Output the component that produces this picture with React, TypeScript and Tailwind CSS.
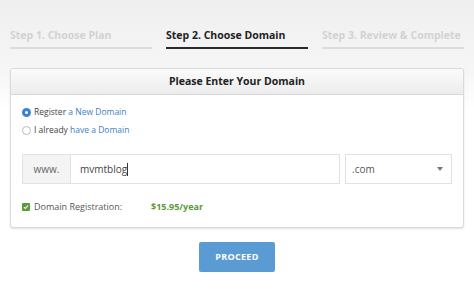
const steps = [
  { label: 'Step 1. Choose Plan', active: false },
  { label: 'Step 2. Choose Domain', active: true },
  { label: 'Step 3. Review & Complete', active: false },
];

export default function App() {
  return (
    <div
      className="w-[474px] h-[295px] overflow-hidden bg-[linear-gradient(to_bottom,#efefef_0px,#f6f6f6_70px,#ffffff_110px)]"
      style={{ fontFamily: '"Open Sans", "Liberation Sans", sans-serif' }}
    >
      <div className="flex gap-[14px] px-[10px] pt-[28px]">
        {steps.map((s) => (
          <div
            key={s.label}
            className={`flex-1 min-w-0 whitespace-nowrap pb-[5px] border-b-2 text-[10.5px] font-bold leading-[14px] ${
              s.active ? 'border-[#2a2a2a] text-[#222]' : 'border-[#dcdcdc] text-[#d2d2d2]'
            }`}
          >
            {s.label}
          </div>
        ))}
      </div>

      <div className="mx-[10px] mt-[19px] rounded-[3px] border border-[#dadada] bg-white shadow-[0_1px_2px_rgba(0,0,0,0.12)]">
        <div className="h-[26px] flex items-center justify-center border-b border-[#d8d8d8] bg-gradient-to-b from-[#fbfbfb] to-[#ececec] rounded-t-[3px] text-[10.5px] font-bold text-[#222]">
          Please Enter Your Domain
        </div>

        <div className="px-[11px] pt-[11px] pb-[14px]">
          <div className="flex flex-col gap-[6px] text-[8.5px] text-[#444] leading-[12px]">
            <label className="flex items-center gap-[3px]">
              <span className="w-[9px] h-[9px] rounded-full bg-[#3b82d6] flex items-center justify-center">
                <span className="w-[3px] h-[3px] rounded-full bg-white" />
              </span>
              <span>
                Register <span className="text-[#3d7fc0]">a New Domain</span>
              </span>
            </label>
            <label className="flex items-center gap-[3px]">
              <span className="w-[9px] h-[9px] rounded-full border border-[#bbb] bg-white" />
              <span>
                I already <span className="text-[#3d7fc0]">have a Domain</span>
              </span>
            </label>
          </div>

          <div className="flex gap-[5px] mt-[18px] h-[30px]">
            <div className="flex flex-1 border border-[#e2e2e2]">
              <div className="w-[48px] bg-[#f4f4f4] border-r border-[#e2e2e2] flex items-center justify-center text-[10px] text-[#666]">
                www.
              </div>
              <div className="flex-1 flex items-center pl-[9px] text-[10px] text-[#444]">
                mvmtblog<span className="w-px h-[13px] bg-[#333]" />
              </div>
            </div>
            <div className="w-[107px] border border-[#e2e2e2] flex items-center justify-between pl-[6px] pr-[8px] text-[10px] text-[#555]">
              <span>.com</span>
              <span className="w-0 h-0 border-l-[3.5px] border-r-[3.5px] border-t-[4px] border-l-transparent border-r-transparent border-t-[#777]" />
            </div>
          </div>

          <div className="flex items-center mt-[17px] text-[9px] leading-[12px]">
            <span className="w-[8px] h-[8px] rounded-[1px] bg-[#5e9a3f] flex items-center justify-center">
              <svg viewBox="0 0 8 8" className="w-[6px] h-[6px]">
                <path d="M1.2 4.2 L3.1 6 L6.8 1.8" fill="none" stroke="white" strokeWidth="1.4" />
              </svg>
            </span>
            <span className="ml-[4px] w-[117px] text-[#555]">Domain Registration:</span>
            <span className="font-bold text-[#5b9a3a]">$15.95/year</span>
          </div>
        </div>
      </div>

      <div className="flex justify-center mt-[14px]">
        <button className="w-[76px] h-[30px] rounded-[2px] bg-[#5b9bd4] text-white text-[9px] font-bold tracking-[0.3px]">
          PROCEED
        </button>
      </div>
    </div>
  );
}
